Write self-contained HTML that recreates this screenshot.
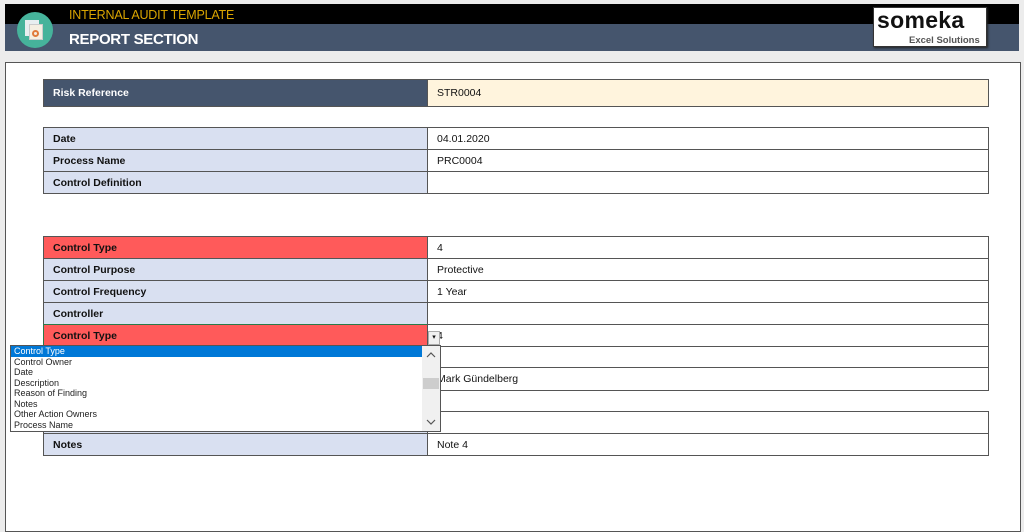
<!DOCTYPE html>
<html><head><meta charset="utf-8"><style>
*{margin:0;padding:0;box-sizing:border-box}
body{width:1024px;height:525px;background:#ececec;position:relative;overflow:hidden;font-family:"Liberation Sans",Arial,sans-serif;font-size:10.5px;color:#111}
.a{position:absolute}
.c{position:absolute;border:1px solid #555;display:flex;align-items:center;white-space:nowrap}
.l{left:43px;width:385px;padding-left:9px;font-weight:bold;background:#d9e0f1}
.v{left:427px;width:562px;padding-left:9px;background:#fff}
.r{background:#ff5a5a}
.it{height:10.5px;line-height:10.5px;font-size:9px;padding-left:3px;color:#222}
</style></head><body>
<div class="a" style="left:5px;top:4px;width:1014px;height:20px;background:#000"></div>
<div class="a" style="left:5px;top:24px;width:1014px;height:27px;background:#45556d"></div>
<div class="a" style="left:17px;top:12px;width:36px;height:36px;border-radius:50%;background:#46b39b"></div>
<div class="a" style="left:25px;top:20px;width:14px;height:16px;background:#e8eef0"></div>
<div class="a" style="left:29px;top:24px;width:14px;height:16px;background:#f5efe2;border:1px solid #ccc"></div>
<div class="a" style="left:32px;top:30px;width:7px;height:7px;border-radius:50%;border:2px solid #e07a3a"></div>
<div class="a" style="left:69px;top:8px;color:#d9a400;font-size:12.5px;letter-spacing:-0.2px">INTERNAL AUDIT TEMPLATE</div>
<div class="a" style="left:69px;top:31px;color:#fff;font-size:15px;font-weight:bold;letter-spacing:-0.3px">REPORT SECTION</div>
<div class="a" style="left:873px;top:7px;width:114px;height:40px;background:#fff;border:1px solid #333;box-shadow:1px 1px 2px #222"></div>
<div class="a" style="left:877px;top:7px;font-size:23px;color:#111;font-weight:bold;letter-spacing:0.3px">someka</div>
<div class="a" style="left:909px;top:35px;font-size:9.5px;font-weight:bold;color:#555">Excel Solutions</div>
<div class="a" style="left:5px;top:62px;width:1016px;height:470px;background:#fff;border:1px solid #555"></div>

<div class="c l" style="top:79px;height:28px;background:#45556d;color:#fff">Risk Reference</div>
<div class="c v" style="top:79px;height:28px;background:#fff4dd">STR0004</div>

<div class="c l" style="top:127px;height:23px">Date</div><div class="c v" style="top:127px;height:23px">04.01.2020</div>
<div class="c l" style="top:149px;height:23px">Process Name</div><div class="c v" style="top:149px;height:23px">PRC0004</div>
<div class="c l" style="top:171px;height:23px">Control Definition</div><div class="c v" style="top:171px;height:23px"></div>

<div class="c l r" style="top:236px;height:23px">Control Type</div><div class="c v" style="top:236px;height:23px">4</div>
<div class="c l" style="top:258px;height:23px">Control Purpose</div><div class="c v" style="top:258px;height:23px">Protective</div>
<div class="c l" style="top:280px;height:23px">Control Frequency</div><div class="c v" style="top:280px;height:23px">1 Year</div>
<div class="c l" style="top:302px;height:23px">Controller</div><div class="c v" style="top:302px;height:23px"></div>
<div class="c l r" style="top:324px;height:23px;border-color:#2a7a4a">Control Type</div><div class="c v" style="top:324px;height:23px">4</div>
<div class="c l" style="top:346px;height:22px"></div><div class="c v" style="top:346px;height:22px"></div>
<div class="c l" style="top:367px;height:24px"></div><div class="c v" style="top:367px;height:24px">Mark Gündelberg</div>

<div class="c l" style="top:411px;height:23px"></div><div class="c v" style="top:411px;height:23px"></div>
<div class="c l" style="top:433px;height:23px">Notes</div><div class="c v" style="top:433px;height:23px">Note 4</div>

<div class="a" style="left:428px;top:331px;width:12px;height:14px;background:#f0f0f0;border:1px solid #aaa;font-size:7px;text-align:center;line-height:12px">▾</div>
<div class="a" style="left:10px;top:345px;width:431px;height:87px;background:#fff;border:1px solid #555">
 <div class="it" style="background:#0078d7;color:#fff;width:411px">Control Type</div>
 <div class="it">Control Owner</div>
 <div class="it">Date</div>
 <div class="it">Description</div>
 <div class="it">Reason of Finding</div>
 <div class="it">Notes</div>
 <div class="it">Other Action Owners</div>
 <div class="it">Process Name</div>
 <div class="a" style="left:411px;top:0;width:18px;height:85px;background:#f0f0f0"></div>
 <div class="a" style="left:412px;top:32px;width:16px;height:11px;background:#cdcdcd"></div>
 <svg class="a" style="left:415px;top:6px" width="10" height="6"><path d="M1 5L5 1L9 5" stroke="#555" fill="none" stroke-width="1.2"/></svg>
 <svg class="a" style="left:415px;top:73px" width="10" height="6"><path d="M1 1L5 5L9 1" stroke="#555" fill="none" stroke-width="1.2"/></svg>
</div>
</body></html>
